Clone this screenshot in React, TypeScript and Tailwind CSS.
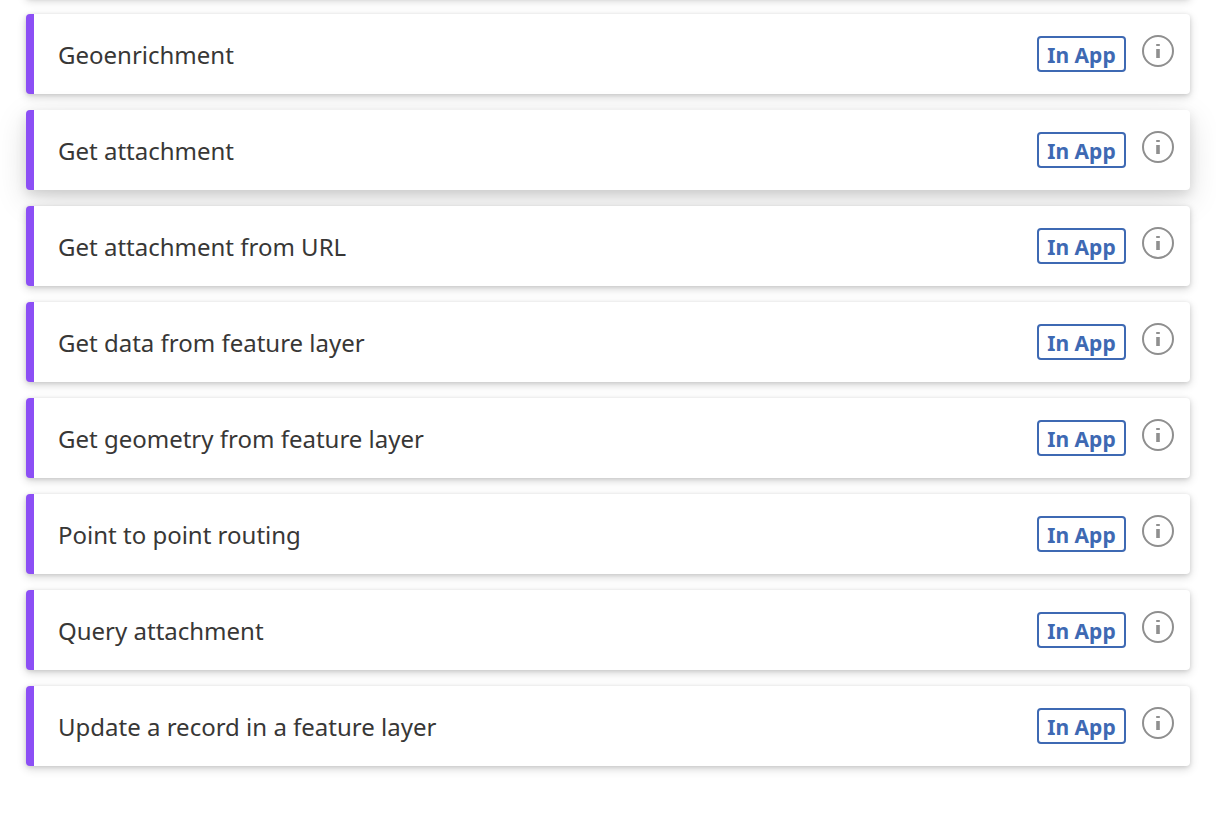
import React from "react";
import clsx from "clsx";

interface Operation {
  name: string;
  raised?: boolean;
}

const operations: Operation[] = [
  { name: "Geoenrichment" },
  { name: "Get attachment", raised: true },
  { name: "Get attachment from URL" },
  { name: "Get data from feature layer" },
  { name: "Get geometry from feature layer" },
  { name: "Point to point routing" },
  { name: "Query attachment" },
  { name: "Update a record in a feature layer" },
];

const cardClass =
  "h-20 rounded-[4px] border-l-8 border-[#8c4ff5] bg-white";
const restShadow =
  "shadow-[0_3px_10px_rgba(0,0,0,0.16),0_1px_4px_rgba(0,0,0,0.12)]";
const raisedShadow =
  "shadow-[0_10px_32px_rgba(0,0,0,0.132),0_4px_12px_rgba(0,0,0,0.12)]";

const InfoIcon: React.FC = () => (
  <svg viewBox="0 0 32 32" className="size-8" fill="none" aria-hidden="true">
    <circle cx="16" cy="16" r="15" stroke="#8f8f8f" strokeWidth="2" />
    <path d="M14.2 9h3.6v2h-3.6zM14.2 14h3.6v9h-3.6z" fill="#8f8f8f" />
  </svg>
);

const OperationCard: React.FC<Operation> = ({ name, raised }) => {
  return (
    <li
      className={clsx(
        "flex items-start pr-4",
        cardClass,
        raised ? raisedShadow : restShadow
      )}
    >
      <button
        type="button"
        className="h-20 min-w-0 grow cursor-pointer truncate pt-0.5 pl-6 text-left text-2xl leading-9 text-[#383736]"
      >
        {name}
      </button>
      <span className="mt-[22px] flex h-9 min-w-[89px] shrink-0 items-center justify-center rounded-[4px] border-2 border-[#3e69b3] pt-0.5 text-[21px] leading-8 font-bold text-[#3e69b3]">
        In App
      </span>
      <button
        type="button"
        aria-label={`About ${name}`}
        className="mt-[21px] ml-4 shrink-0 cursor-pointer"
      >
        <InfoIcon />
      </button>
    </li>
  );
};

const App: React.FC = () => {
  return (
    <main className="overflow-hidden bg-white px-[26px] pb-[50px] font-['Noto_Sans',sans-serif]">
      <div className={clsx("-mt-[82px]", cardClass, restShadow)} />
      <ul className="mt-4 flex flex-col gap-4">
        {operations.map((operation) => (
          <OperationCard key={operation.name} {...operation} />
        ))}
      </ul>
    </main>
  );
};

export default App;
